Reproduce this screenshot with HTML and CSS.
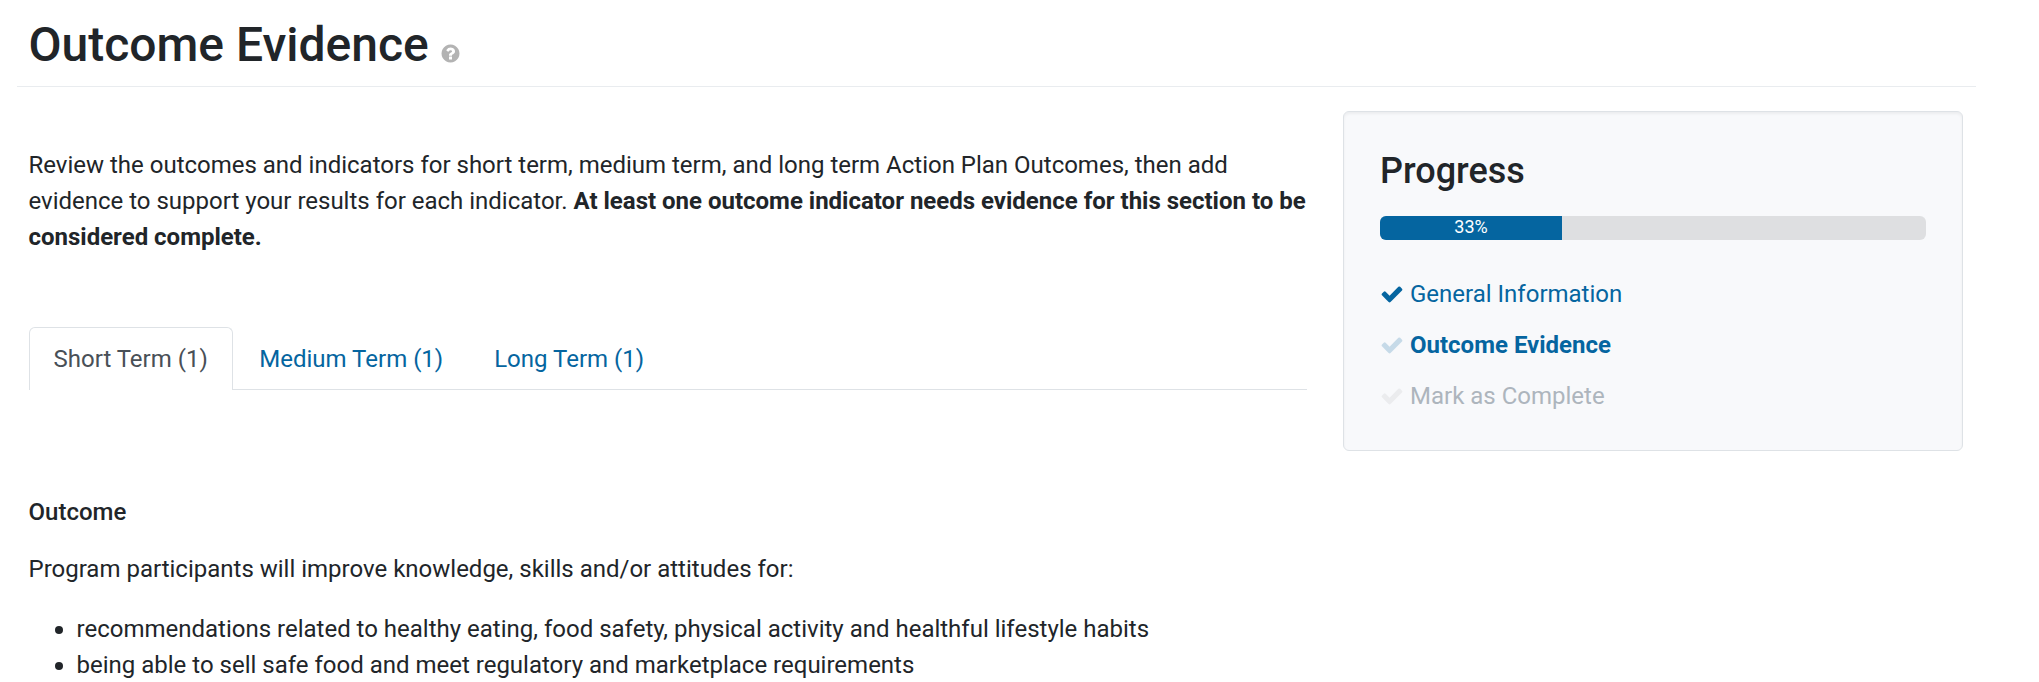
FILE: index.html
```html
<!DOCTYPE html>
<html lang="en">
<head>
<meta charset="utf-8">
<title>Outcome Evidence</title>
<link rel="stylesheet" href="styles.css">
</head>
<body>
<svg class="defs" aria-hidden="true">
  <symbol id="check" viewBox="0 0 1792 1792"><path d="M1671 566q0 40-28 68l-724 724-136 136q-28 28-68 28t-68-28l-136-136-362-362q-28-28-28-68t28-68l136-136q28-28 68-28t68 28l294 295 656-657q28-28 68-28t68 28l136 136q28 28 28 68z"/></symbol>
  <symbol id="help" viewBox="0 0 1792 1792"><path d="M1024 1376v-192q0-14-9-23t-23-9h-192q-14 0-23 9t-9 23v192q0 14 9 23t23 9h192q14 0 23-9t9-23zm256-672q0-88-55.5-163t-138.5-116-170-41q-243 0-371 213-15 24 8 42l132 100q7 6 19 6 16 0 25-12 53-68 86-92 34-24 86-24 48 0 85.5 26t37.5 59q0 38-20 61t-68 45q-63 28-115.5 86.5t-52.5 125.5v36q0 14 9 23t23 9h192q14 0 23-9t9-23q0-19 21.5-49.5t54.5-49.5q32-18 49-28.5t46-35 44.5-48 28-60.5 12.5-81zm384 192q0 209-103 385.5t-279.5 279.5-385.5 103-385.5-103-279.5-279.5-103-385.5 103-385.5 279.5-279.5 385.5-103 385.5 103 279.5 279.5 103 385.5z"/></symbol>
</svg>
<header class="page-header">
  <h1 class="title">Outcome Evidence</h1>
  <svg class="help"><use href="#help"/></svg>
</header>
<div class="columns">
  <main class="main">
    <p class="intro">Review the outcomes and indicators for short term, medium term, and long term Action Plan Outcomes, then add evidence to support your results for each indicator. <strong>At least one outcome indicator needs evidence for this section to be considered complete.</strong></p>
    <nav class="tabs">
      <a class="tab active">Short Term (1)</a>
      <a class="tab">Medium Term (1)</a>
      <a class="tab">Long Term (1)</a>
    </nav>
    <h2 class="subhead">Outcome</h2>
    <p class="lead">Program participants will improve knowledge, skills and/or attitudes for:</p>
    <ul class="list">
      <li class="item">recommendations related to healthy eating, food safety, physical activity and healthful lifestyle habits</li>
      <li class="item">being able to sell safe food and meet regulatory and marketplace requirements</li>
    </ul>
  </main>
  <aside class="card">
    <h2 class="card-title">Progress</h2>
    <div class="progress"><div class="bar" style="width:33.3333%">33%</div></div>
    <div class="steps">
      <a class="step"><svg class="check"><use href="#check"/></svg>General Information</a>
      <a class="step current"><svg class="check"><use href="#check"/></svg>Outcome Evidence</a>
      <a class="step disabled"><svg class="check"><use href="#check"/></svg>Mark as Complete</a>
    </div>
  </aside>
</div>
</body>
</html>
```
FILE: styles.css
```css
* { box-sizing: border-box; }
html { overflow: hidden; }
body { margin: 0; padding: 0 63px 0 17px; height: 682px; overflow: hidden; font: 24px/36px Roboto, "Liberation Sans", sans-serif; color: #212529; background: #fff; }
h1, h2, p, ul { margin: 0; }
.defs { display: none; }
.page-header { display: flex; gap: 11px; height: 87px; padding: 15px 12px 0 11.5px; border-bottom: 1px solid #e9ecef; }
.title { padding-top: 1px; font-size: 48px; line-height: 58px; font-weight: 500; }
.help { width: 21px; height: 21px; margin-top: 28px; fill: #b3b3b3; }
.columns { display: flex; align-items: flex-start; justify-content: space-between; padding: 24px 13px 0 11.5px; }
.main { width: 1278.5px; padding-top: 36px; }
.intro { margin-bottom: 72px; letter-spacing: -0.005px; }
.intro strong { font-weight: 700; }
.tabs { display: flex; gap: 1px; height: 63px; border-bottom: 1px solid #dee2e6; }
.tab { height: 63px; padding: 13px 24px 0; border: 1px solid transparent; border-bottom: 0; border-radius: 6px 6px 0 0; color: #0565a0; }
.tab.active { padding-right: 24.5px; color: #495057; background: #fff; border-color: #dee2e6; }
.subhead { margin-top: 108px; font-size: 24px; line-height: 29px; font-weight: 500; }
.lead { margin: 24px 0 24px; }
.list { padding-left: 26px; list-style: none; }
.item { display: flex; gap: 14px; }
.item::before { content: ""; width: 8px; height: 8px; margin-top: 15px; border-radius: 50%; background: #212529; }
.card { width: 620px; height: 340px; padding: 38px 36px 36px; border: 1px solid #dee2e6; border-radius: 6px; background: #f8f9fb; box-shadow: inset 0 2px 3px rgba(0,0,0,.05); }
.card-title { font-size: 36px; line-height: 43px; font-weight: 500; margin-bottom: 23px; }
.progress { height: 24px; border-radius: 6px; overflow: hidden; background: #dedfe1; }
.bar { height: 24px; background: #0565a0; color: #fff; font-size: 18px; line-height: 22px; text-align: center; }
.steps { display: flex; flex-direction: column; gap: 15px; margin-top: 36px; }
.step { display: flex; gap: 6px; color: #0565a0; }
.check { width: 24px; height: 24px; margin-top: 6px; fill: #0565a0; }
.current { font-weight: 700; }
.current .check { opacity: .2; }
.disabled { color: #adb5bd; }
.disabled .check { fill: #ebecee; }
```
